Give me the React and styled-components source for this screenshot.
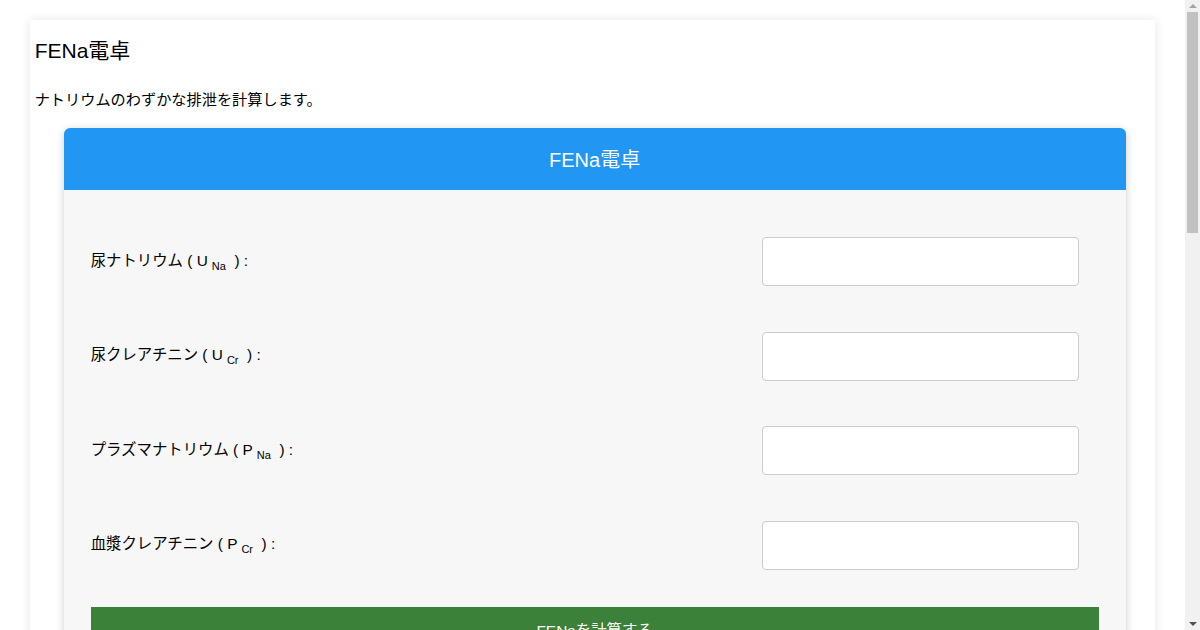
import React from "react";
import styled, { createGlobalStyle } from "styled-components";

const Global = createGlobalStyle`
  html, body { margin: 0; padding: 0; background: #fff; }
  body { font-family: "Liberation Sans", "Noto Sans CJK JP", sans-serif; color: #000; padding-right: 15px; }
  * { box-sizing: border-box; }
`;

const Page = styled.div`
  width: 95%;
  margin: 20px auto 40px;
  padding: 5px 5px 40px;
  background: #fff;
  box-shadow: 0 0 10px rgba(0, 0, 0, 0.1);
`;

const Title = styled.h2`
  margin: 14px 0 27px;
  font-size: 21px;
  line-height: 24px;
  font-weight: normal;
`;

const Lead = styled.p`
  margin: 0 0 18px;
  font-size: 15.2px;
  line-height: 20px;
`;

const Card = styled.div`
  width: 1062px;
  margin-left: 29px;
  border-radius: 6px;
  overflow: hidden;
  background: #f7f7f7;
  box-shadow: 0 2px 8px rgba(0, 0, 0, 0.2);
`;

const CardHeader = styled.div`
  height: 62px;
  padding-bottom: 2px;
  background: #2196f3;
  color: #fff;
  font-size: 20px;
  display: flex;
  align-items: center;
  justify-content: center;
`;

const CardBody = styled.div`
  padding: 47px 27px 30px;
  display: flex;
  flex-direction: column;
`;

const Fields = styled.div`
  display: flex;
  flex-direction: column;
  gap: 45.67px;
  margin-bottom: 37px;
`;

const Row = styled.div`
  display: grid;
  grid-template-columns: 1fr 317px 20px;
  align-items: center;
  height: 49px;
`;

const Label = styled.label`
  font-size: 15.4px;
  line-height: 20px;
  padding-top: 3px;
  sub { font-size: 11px; vertical-align: -4px; margin-left: 4px; }
`;

const Input = styled.input`
  height: 49px;
  width: 100%;
  border: 1px solid #ccc;
  border-radius: 4px;
  background: #fff;
  font-size: 15px;
  padding: 0 10px;
  outline: none;
`;

const Button = styled.button`
  height: 44px;
  width: 100%;
  border: none;
  background: #3b8139;
  color: #fff;
  font-family: inherit;
  font-size: 15.4px;
  padding-top: 2px;
`;

const Result = styled.div`
  height: 600px;
`;

const Scrollbar = styled.div`
  position: fixed;
  top: 0;
  right: 0;
  width: 15px;
  height: 100vh;
  background: #f1f1f1;
  display: flex;
  flex-direction: column;
  align-items: center;
  justify-content: space-between;
  padding: 4px 0;
`;

const Arrow = styled.div`
  width: 0;
  height: 0;
  border-left: 4px solid transparent;
  border-right: 4px solid transparent;
  ${(p) => (p.$up ? "border-bottom: 4px solid #a3a3a3;" : "border-top: 4px solid #505050;")}
`;

const Thumb = styled.div`
  position: absolute;
  top: 12px;
  left: 2px;
  width: 11px;
  height: 221px;
  background: #c1c1c1;
`;

const fields = [
  ["尿ナトリウム", "U", "Na"],
  ["尿クレアチニン", "U", "Cr"],
  ["プラズマナトリウム", "P", "Na"],
  ["血漿クレアチニン", "P", "Cr"],
];

export default function App() {
  return (
    <>
      <Global />
      <Page>
        <Title>FENa電卓</Title>
        <Lead>ナトリウムのわずかな排泄を計算します。</Lead>
        <Card>
          <CardHeader>FENa電卓</CardHeader>
          <CardBody>
            <Fields>
              {fields.map(([name, a, b]) => (
                <Row key={name + b}>
                  <Label>
                    {name} ( {a}
                    <sub>{b}</sub>&nbsp; ) :
                  </Label>
                  <Input type="text" />
                </Row>
              ))}
            </Fields>
            <Button>FENaを計算する</Button>
            <Result />
          </CardBody>
        </Card>
      </Page>
      <Scrollbar>
        <Arrow $up />
        <Thumb />
        <Arrow />
      </Scrollbar>
    </>
  );
}
